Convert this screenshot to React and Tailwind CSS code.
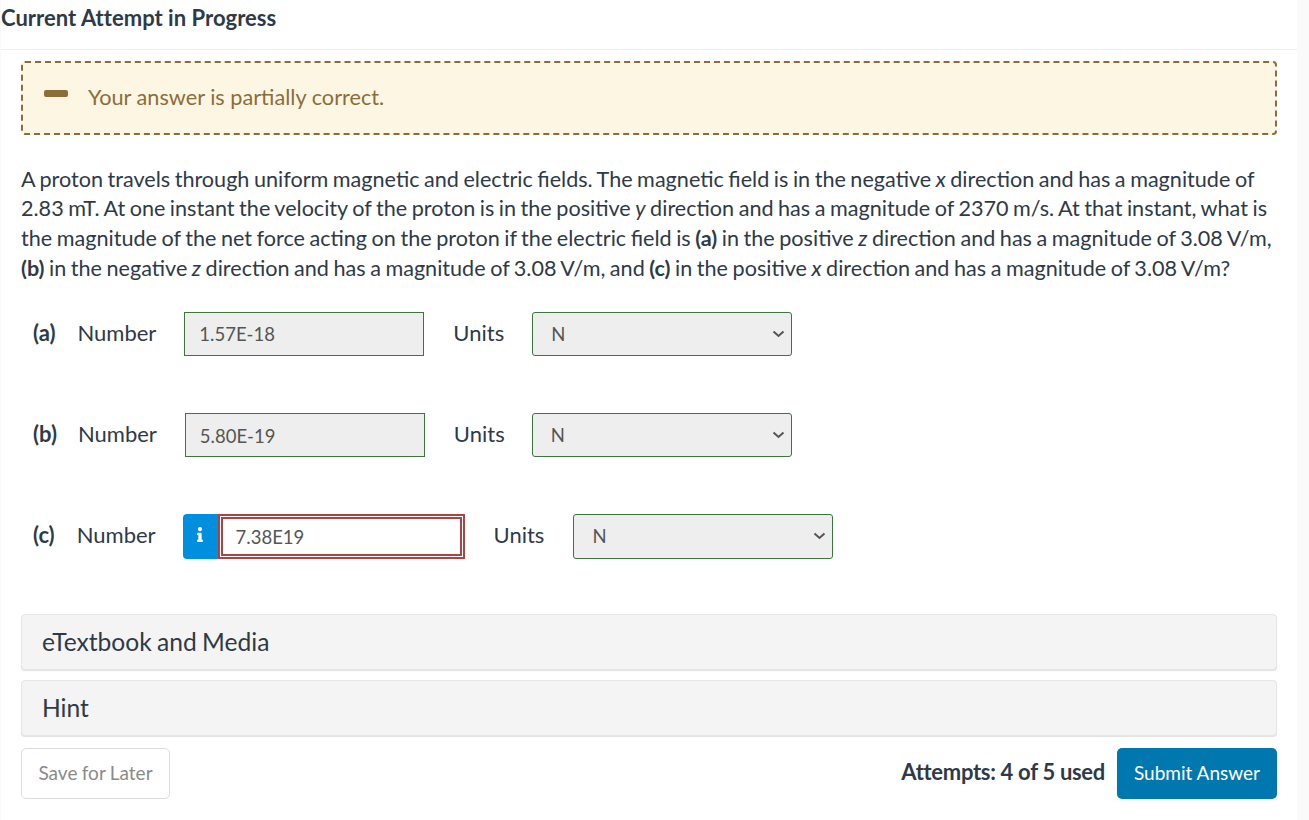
import { FaInfo } from "react-icons/fa";

const Units = ({ tall }) => (
  <div className="relative">
    <select
      defaultValue="N"
      className={`appearance-none block w-[260px] ${tall ? "h-[45px]" : "h-[44px]"} border border-[#3c763d] rounded-[3px] bg-[#eeeeee] pl-[18px] pt-[2px] text-[18.5px] text-[#555] outline-none`}
    >
      <option>N</option>
    </select>
    <svg className="absolute right-[7px] top-[18px] w-[13px] h-[8px] pointer-events-none" viewBox="0 0 13 8" fill="none" stroke="#555" strokeWidth="2">
      <path d="M1.5 1.5 L6.5 6 L11.5 1.5" />
    </svg>
  </div>
);

const Row = ({ label, value, className, labelClass, inputClass, unitsClass, wrong }) => (
  <div className={`flex items-center h-[44px] pl-[12px] ${className}`}>
    <span className={`font-bold text-[22px] text-[#2e3a47] mb-[4px] ${labelClass}`}>{label}</span>
    <span className={`text-[22px] text-[#2e3a47] mb-[4px] ${wrong ? "mr-[27px]" : "mr-[28px]"}`}>Number</span>
    {wrong ? (
      <div className="flex h-[45px]">
        <span className="w-[35px] bg-[#008fde] rounded-l-[4px] flex items-center justify-center text-white">
          <FaInfo className="w-[12px] h-[15px] mb-[4px]" />
        </span>
        <input
          readOnly
          value={value}
          className="w-[247px] h-[45px] border-[5px] border-double border-[#a94442] bg-white pl-[13px] pt-[2px] text-[18.5px] text-[#555] outline-none"
        />
      </div>
    ) : (
      <input
        readOnly
        value={value}
        className={`w-[240px] h-[44px] border border-[#3c763d] bg-[#eeeeee] pl-[14px] text-[18.5px] text-[#555] outline-none ${inputClass}`}
      />
    )}
    <span className={`text-[22px] text-[#2e3a47] ml-[29px] mb-[4px] ${unitsClass}`}>Units</span>
    <Units tall={wrong} />
  </div>
);

const Panel = ({ title, className }) => (
  <div className={`h-[56px] flex items-center px-[20px] bg-[#f4f4f4] border border-[#e6e6e6] rounded-[4px] shadow-[0_1px_1px_rgba(0,0,0,0.12)] text-[24.6px] text-[#2e3a47] [word-spacing:-1px] ${className}`}>
    {title}
  </div>
);

export default function App() {
  return (
    <div className="h-[820px] bg-[#fafafa] font-['Lato',sans-serif] overflow-hidden">
      <div className="w-[1296px] h-[820px] ml-px bg-white">
        <div className="h-[50px] border-b border-[#eeeeee] pt-[2px] leading-[31px] text-[22px] font-bold text-[#2e3a47] tracking-[0.03px]">
          Current Attempt in Progress
        </div>
        <div className="px-[20px]">
          <div className="mt-[11px] h-[74px] flex items-center bg-[#fdf6e3] border-2 border-dashed border-[#8c6d3a] rounded-[4px] text-[21.7px] text-[#8c6d3a]">
            <span className="ml-[21px] mb-[9px] w-[24px] h-[7px] rounded-[2px] bg-[#8c6d3a]"></span>
            <span className="ml-[20px] mb-[1px]">Your answer is partially correct.</span>
          </div>

          <p className="mt-[29.6px] text-[21.6px] leading-[29.75px] text-[#2e3a47] [word-spacing:-1px]">
            A proton travels through uniform magnetic and electric fields. The magnetic field is in the negative <i>x</i> direction and has a magnitude of 2.83 mT. At one instant the velocity of the proton is in the positive <i>y</i> direction and has a magnitude of 2370 m/s. At that instant, what is the magnitude of the net force acting on the proton if the electric field is <b>(a)</b> in the positive <i>z</i> direction and has a magnitude of 3.08 V/m, <b>(b)</b> in the negative <i>z</i> direction and has a magnitude of 3.08 V/m, and <b>(c)</b> in the positive <i>x</i> direction and has a magnitude of 3.08 V/m?
          </p>

          <Row label="(a)" value="1.57E-18" className="mt-[28.5px]" labelClass="mr-[22px]" unitsClass="mr-[28px]" />
          <Row label="(b)" value="5.80E-19" className="mt-[57px]" labelClass="mr-[21px]" inputClass="pt-[2px]" unitsClass="mr-[27px]" />
          <Row label="(c)" value="7.38E19" className="mt-[57px]" labelClass="mr-[22px]" unitsClass="mr-[29px]" wrong />

          <Panel title="eTextbook and Media" className="mt-[56px]" />
          <Panel title="Hint" className="mt-[10px]" />

          <div className="mt-[12px] flex items-center">
            <button className="w-[149px] h-[51px] bg-white border border-[#dddddd] rounded-[5px] text-[19px] text-[#8a8a8a] [word-spacing:-0.5px]">
              Save for Later
            </button>
            <span className="ml-auto mr-[12px] mb-[4px] text-[22px] font-bold text-[#2e3a47] tracking-[-0.3px]">Attempts: 4 of 5 used</span>
            <button className="w-[160px] h-[51px] bg-[#0077ae] rounded-[5px] text-[19px] text-white">
              Submit Answer
            </button>
          </div>
        </div>
      </div>
    </div>
  );
}
